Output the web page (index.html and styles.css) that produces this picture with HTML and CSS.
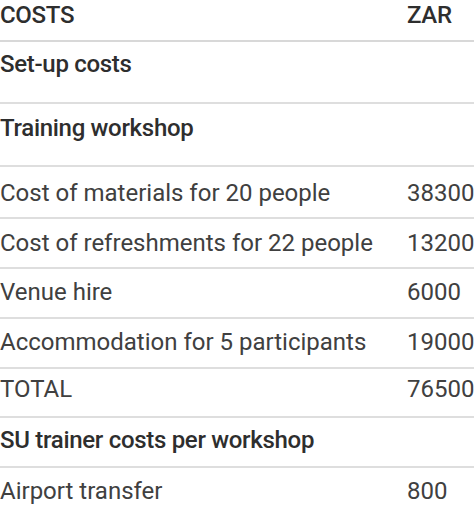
FILE: index.html
```html
<!DOCTYPE html>
<html>
<head>
<meta charset="utf-8">
<link rel="stylesheet" href="styles.css">
</head>
<body>
<div class="table">
  <div class="row head"><div class="c1 bold">COSTS</div><div class="c2 bold">ZAR</div></div>
  <div class="row section setup"><div class="c1 bold">Set-up costs</div><div class="c2"></div></div>
  <div class="row section training"><div class="c1 bold">Training workshop</div><div class="c2"></div></div>
  <div class="row data first"><div class="c1">Cost of materials for 20 people</div><div class="c2">38300</div></div>
  <div class="row data refresh"><div class="c1">Cost of refreshments for 22 people</div><div class="c2">132000</div></div>
  <div class="row data"><div class="c1">Venue hire</div><div class="c2">6000</div></div>
  <div class="row data"><div class="c1">Accommodation for 5 participants</div><div class="c2">190000</div></div>
  <div class="row data total"><div class="c1">TOTAL</div><div class="c2">765000</div></div>
  <div class="row data su"><div class="c1 bold">SU trainer costs per workshop</div><div class="c2"></div></div>
  <div class="row data"><div class="c1">Airport transfer</div><div class="c2">800</div></div>
</div>
</body>
</html>
```

FILE: styles.css
```css
html, body {
  margin: 0;
  padding: 0;
  background: #ffffff;
  overflow: hidden;
}
body {
  font-family: Roboto, "Liberation Sans", sans-serif;
  font-size: 24px;
  line-height: 28px;
  color: #404040;
  width: 474px;
}
.table {
  display: flex;
  flex-direction: column;
}
.row {
  display: grid;
  grid-template-columns: 407px 67px;
  border-bottom: 2px solid #dedede;
  white-space: nowrap;
}
.c2 {
  overflow: hidden;
}
.bold {
  font-weight: 500;
  color: #2e2e2e;
  letter-spacing: -0.3px;
}
.head {
  padding: 1px 0 11px;
  border-bottom: 2px solid #d8d8d8;
}
.setup {
  padding: 8px 0 24px;
}
.training {
  padding: 10px 0 23px;
}
.data {
  padding: 9px 0 11px;
}
.data.first {
  padding: 12px 0 10px;
}
.data.refresh {
  padding: 10px 0 10px;
}
.total {
  padding: 6px 0 13px;
}
.su {
  padding: 8px 0 12px;
}
```
